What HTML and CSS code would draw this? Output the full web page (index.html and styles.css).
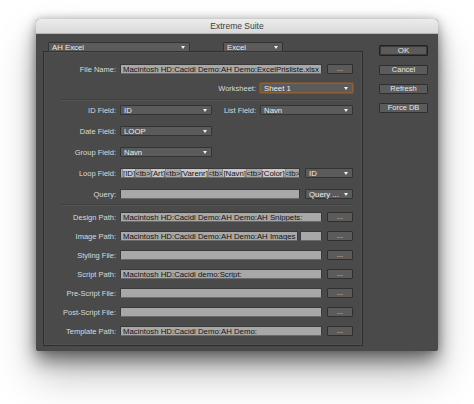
FILE: index.html
```html
<!DOCTYPE html>
<html lang="en">
<head>
    <meta charset="UTF-8">
    <meta name="viewport" content="width=device-width, initial-scale=1.0">
    <title>Extreme Suite</title>
    <link rel="stylesheet" href="styles.css">
</head>
<body>
    <div class="window">
        <div class="titlebar">Extreme Suite</div>
        <div class="window-body">
            <div class="main">
                <div class="top-selects">
                    <div class="select select-source">AH Excel</div>
                    <div class="select select-type">Excel</div>
                </div>

                <div class="group">
                    <div class="section section-file">
                        <div class="row">
                            <span class="label">File Name:</span>
                            <div class="field field-path">Macintosh HD:Cacidi Demo:AH Demo:ExcelPrisliste.xlsx</div>
                            <div class="browse">...</div>
                        </div>
                        <div class="row row-sheet">
                            <span class="label">Worksheet:</span>
                            <div class="select select-wide focused">Sheet 1</div>
                        </div>
                    </div>

                    <div class="separator"></div>

                    <div class="section section-fields">
                        <div class="row">
                            <span class="label">ID Field:</span>
                            <div class="select select-field">ID</div>
                            <span class="label label-short">List Field:</span>
                            <div class="select select-wide">Navn</div>
                        </div>
                        <div class="row">
                            <span class="label">Date Field:</span>
                            <div class="select select-field">LOOP</div>
                        </div>
                        <div class="row">
                            <span class="label">Group Field:</span>
                            <div class="select select-field">Navn</div>
                        </div>
                        <div class="row">
                            <span class="label">Loop Field:</span>
                            <div class="field field-loop"><span class="token">[ID]</span>&lt;tb&gt;<span class="token">[Art]</span>&lt;tb&gt;<span class="token">[Varenr]</span>&lt;tb&gt;<span class="token">[Navn]</span>&lt;tb&gt;<span class="token">[Color]</span>&lt;tb&gt;</div>
                            <div class="select select-small">ID</div>
                        </div>
                        <div class="row">
                            <span class="label">Query:</span>
                            <div class="field field-loop"></div>
                            <div class="select select-small">Query ...</div>
                        </div>
                    </div>

                    <div class="separator separator-low"></div>

                    <div class="section section-paths">
                        <div class="row">
                            <span class="label">Design Path:</span>
                            <div class="field field-path">Macintosh HD:Cacidi Demo:AH Demo:AH Snippets:</div>
                            <div class="browse">...</div>
                        </div>
                        <div class="row">
                            <span class="label">Image Path:</span>
                            <div class="field field-image">Macintosh HD:Cacidi Demo:AH Demo:AH Images</div>
                            <div class="field field-stub"></div>
                            <div class="browse">...</div>
                        </div>
                        <div class="row">
                            <span class="label">Styling File:</span>
                            <div class="field field-path"></div>
                            <div class="browse">...</div>
                        </div>
                        <div class="row">
                            <span class="label">Script Path:</span>
                            <div class="field field-path">Macintosh HD:Cacidi demo:Script:</div>
                            <div class="browse">...</div>
                        </div>
                        <div class="row">
                            <span class="label">Pre-Script File:</span>
                            <div class="field field-path"></div>
                            <div class="browse">...</div>
                        </div>
                        <div class="row">
                            <span class="label">Post-Script File:</span>
                            <div class="field field-path"></div>
                            <div class="browse">...</div>
                        </div>
                        <div class="row">
                            <span class="label">Template Path:</span>
                            <div class="field field-path">Macintosh HD:Cacidi Demo:AH Demo:</div>
                            <div class="browse">...</div>
                        </div>
                    </div>
                </div>
            </div>

            <div class="buttons">
                <div class="button default">OK</div>
                <div class="button">Cancel</div>
                <div class="button">Refresh</div>
                <div class="button">Force DB</div>
            </div>
        </div>
    </div>
</body>
</html>
```

FILE: styles.css
```css
:root {
    --panel: #4a4a4a;
    --line: #2e2e2e;
    --field: #a8a8a8;
    --control: #5b5b5b;
    --label: #dadada;
}

* {
    margin: 0;
    padding: 0;
    box-sizing: border-box;
}

html {
    background: #ffffff;
}

body {
    min-height: 100vh;
    font-family: 'Liberation Sans', Arial, sans-serif;
    font-size: 7.5px;
    padding: 19px 0 0 36px;
}

.window {
    width: 402px;
    background: var(--panel);
    border-radius: 4px 4px 2px 2px;
    box-shadow: 0 10px 18px rgba(0, 0, 0, 0.45), 0 24px 40px rgba(0, 0, 0, 0.25), 0 0 8px rgba(0, 0, 0, 0.25);
    overflow: hidden;
}

.titlebar {
    height: 15px;
    line-height: 15px;
    text-align: center;
    font-size: 8.5px;
    color: #404040;
    background: linear-gradient(#ececec, #d9d9d9);
    border-bottom: 1px solid #b5b5b5;
}

.window-body {
    display: flex;
    padding: 0 10px 5px 7px;
}

.main {
    width: 320px;
}

.top-selects {
    display: flex;
    gap: 33px;
    margin-top: 8px;
    padding-left: 5px;
    position: relative;
    z-index: 1;
}

.group {
    margin-top: -1px;
    border: 1px solid var(--line);
    box-shadow: inset 0 0 0 1px rgba(255, 255, 255, 0.04);
    padding: 12px 0 9px 0;
}

.section {
    display: flex;
    flex-direction: column;
}

.section-file {
    gap: 9px;
}

.section-fields {
    gap: 11px;
}

.section-paths {
    gap: 9px;
}

.row {
    display: flex;
    align-items: center;
    height: 10px;
}

.row-sheet {
    padding-left: 140px;
}

.label {
    width: 72px;
    margin-right: 4px;
    text-align: right;
    color: var(--label);
    white-space: nowrap;
    flex-shrink: 0;
}

.label-short {
    width: 44px;
}

.field {
    height: 10px;
    line-height: 9px;
    font-size: 7.8px;
    background: var(--field);
    border: 1px solid #3a3a3a;
    border-bottom-color: #6a6a6a;
    color: #111;
    padding-left: 2px;
    white-space: nowrap;
    overflow: hidden;
}

.field-path {
    width: 202px;
}

.field-loop {
    width: 180px;
}

.field-image {
    width: 178px;
}

.field-stub {
    width: 22px;
    margin-left: 2px;
}

.token {
    background: #c9c9c9;
    outline: 1px solid #8c8c8c;
}

.browse {
    width: 26px;
    height: 10px;
    margin-left: 5px;
    line-height: 7px;
    text-align: center;
    color: #d8d8d8;
    background: var(--control);
    border: 1px solid #2f2f2f;
    border-radius: 1px;
}

.select {
    display: flex;
    align-items: center;
    height: 10px;
    padding: 0 4px 0 3px;
    font-size: 7.8px;
    color: #ececec;
    background: var(--control);
    border: 1px solid #333333;
    border-radius: 1px;
    white-space: nowrap;
}

.select::after {
    content: "";
    margin-left: auto;
    border-left: 2px solid transparent;
    border-right: 2px solid transparent;
    border-top: 3px solid #f2f2f2;
}

.select-source {
    width: 142px;
}

.select-type {
    width: 60px;
}

.select-field {
    width: 92px;
}

.select-wide {
    width: 93px;
}

.select-small {
    width: 48px;
    margin-left: 5px;
}

.focused {
    border-color: #8f5f35;
    box-shadow: 0 0 0 1px #7a5230;
}

.separator {
    height: 1px;
    background: #3f3f3f;
    box-shadow: 0 1px 0 rgba(255, 255, 255, 0.05);
    margin: 6px 9px 5px 16px;
}

.separator-low {
    margin: 5px 9px 7px 16px;
}

.buttons {
    display: flex;
    flex-direction: column;
    gap: 9px;
    width: 49px;
    margin-left: 16px;
    padding-top: 11px;
}

.button {
    height: 10px;
    line-height: 8px;
    text-align: center;
    color: #e6e6e6;
    background: var(--control);
    border: 1px solid #2f2f2f;
    border-radius: 1px;
}

.button.default {
    height: 11px;
    line-height: 9px;
    font-size: 8px;
    border-color: #222222;
    box-shadow: inset 0 0 0 1px #3a3a3a;
}
```
